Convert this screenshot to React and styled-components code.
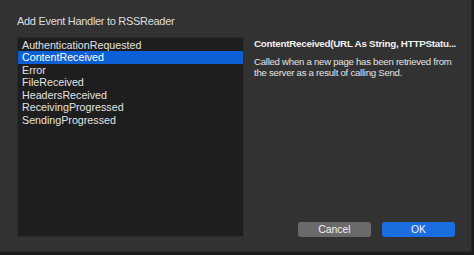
import styled, { createGlobalStyle } from 'styled-components';

const Global = createGlobalStyle`
  html, body {
    margin: 0;
    padding: 0;
    background: #1c1c1c;
    width: 474px;
    height: 255px;
    overflow: hidden;
  }
  body {
    font-family: "Liberation Sans", Arial, sans-serif;
    -webkit-font-smoothing: antialiased;
  }
`;

const Window = styled.div`
  width: 472px;
  height: 252px;
  box-sizing: border-box;
  background: #323232;
  border-right: 1px solid #262626;
  border-bottom: 1px solid #262626;
  padding: 13px 16px 0 17px;
  display: flex;
  flex-direction: column;
`;

const Title = styled.div`
  font-size: 11px;
  letter-spacing: -0.3px;
  line-height: 16px;
  color: #dedede;
  height: 24px;
`;

const Content = styled.div`
  display: flex;
  gap: 10px;
  height: 200px;
`;

const List = styled.div`
  width: 227px;
  box-sizing: border-box;
  background: #1e1e1e;
  border: 1px solid #2a2a2a;
  padding-top: 0.5px;
`;

const Item = styled.div`
  font-size: 10.7px;
  line-height: 12.5px;
  height: 12.5px;
  padding-left: 4px;
  color: ${p => (p.$selected ? '#ffffff' : '#e2e2e2')};
  background: ${p => (p.$selected ? '#0c60d6' : 'transparent')};
  white-space: nowrap;
`;

const Detail = styled.div`
  flex: 1;
  min-width: 0;
  display: flex;
  flex-direction: column;
`;

const Signature = styled.div`
  font-size: 9.8px;
  letter-spacing: -0.25px;
  font-weight: bold;
  line-height: 13px;
  color: #f0f0f0;
  white-space: nowrap;
`;

const Description = styled.div`
  font-size: 9.6px;
  letter-spacing: -0.25px;
  line-height: 10.5px;
  color: #e4e4e4;
  margin-top: 7px;
`;

const Buttons = styled.div`
  margin-top: auto;
  display: flex;
  justify-content: flex-end;
  gap: 11px;
`;

const Button = styled.button`
  width: 73px;
  height: 15px;
  border: none;
  border-radius: 3px;
  padding: 0;
  font-family: "Liberation Sans", Arial, sans-serif;
  font-size: 10.4px;
  line-height: 15px;
  color: #f2f2f2;
  background: ${p => (p.$primary ? '#1b6de0' : '#6a6a6a')};
`;

const events = [
  'AuthenticationRequested',
  'ContentReceived',
  'Error',
  'FileReceived',
  'HeadersReceived',
  'ReceivingProgressed',
  'SendingProgressed',
];

export default function App() {
  return (
    <>
      <Global />
      <Window>
        <Title>Add Event Handler to RSSReader</Title>
        <Content>
          <List>
            {events.map(e => (
              <Item key={e} $selected={e === 'ContentReceived'}>{e}</Item>
            ))}
          </List>
          <Detail>
            <Signature>ContentReceived(URL As String, HTTPStatu...</Signature>
            <Description>
              Called when a new page has been retrieved from the server as a result of calling Send.
            </Description>
            <Buttons>
              <Button>Cancel</Button>
              <Button $primary>OK</Button>
            </Buttons>
          </Detail>
        </Content>
      </Window>
    </>
  );
}
